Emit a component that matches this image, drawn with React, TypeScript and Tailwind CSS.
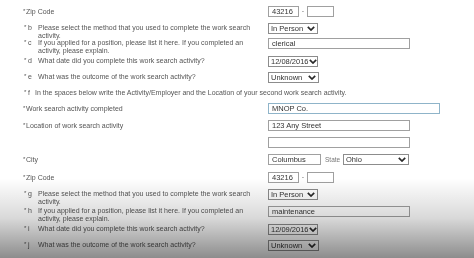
import React from "react";

const font = { fontFamily: '"Liberation Sans", Arial, sans-serif' };

const Chevron = () => (
  <svg width="8" height="5" viewBox="0 0 8 5" className="shrink-0">
    <path d="M0.8 0.8 L4 4 L7.2 0.8" fill="none" stroke="#2a2a2a" strokeWidth="1.7" />
  </svg>
);

const Select = ({ value, w }: { value: string; w: string }) => (
  <div
    className={`${w} h-[11px] border border-[#8c8c8c] bg-white flex items-center justify-between pl-[2px] pr-[2px] text-[7.5px] leading-none text-[#333]`}
  >
    <span>{value}</span>
    <Chevron />
  </div>
);

const Input = ({ value = "", w, focus }: { value?: string; w: string; focus?: boolean }) => (
  <div
    className={`${w} h-[11px] border ${
      focus ? "border-[#8fb4c9]" : "border-[#a0a0a0]"
    } bg-white flex items-center pl-[3px] text-[7.5px] leading-none text-[#333]`}
  >
    {value}
  </div>
);

const Zip = ({ value }: { value: string }) => (
  <div className="flex items-center">
    <Input value={value} w="w-[31px]" />
    <span className="w-[8px] text-center text-[7px] text-[#666]">-</span>
    <Input w="w-[27px]" />
  </div>
);

const Star = ({ w }: { w: string }) => (
  <span className={`${w} text-[#555] text-[length:6px] leading-[6px]`}>*</span>
);

const Plain = ({ text }: { text: string }) => (
  <div className="flex pt-[2px] pl-[23px] leading-[8px]">
    <Star w="w-[3px]" />
    <span>{text}</span>
  </div>
);

const Lettered = ({ letter, lines, textLeft = "w-[10px]" }: { letter: string; lines: string[]; textLeft?: string }) => (
  <div className="flex pt-[1px] pl-[24px] leading-[8px]">
    <Star w="w-[4px]" />
    <span className={textLeft}>{letter}</span>
    <span>
      {lines.map((l, i) => (
        <div key={i}>{l}</div>
      ))}
    </span>
  </div>
);

const Row = ({ h, label, field }: { h: string; label: React.ReactNode; field?: React.ReactNode }) => (
  <div className={`flex ${h}`}>
    <div className="w-[268px] shrink-0">{label}</div>
    <div>{field}</div>
  </div>
);

const methodLines = ["Please select the method that you used to complete the work search", "activity."];
const positionLines = [
  "If you applied for a position, please list it here. If you completed an",
  "activity, please explain.",
];

export default function App() {
  return (
    <div className="relative w-[474px] h-[258px] overflow-hidden bg-white text-[7px] text-[#555]" style={font}>
      <div className="pt-[6px] blur-[0.3px]">
        <Row h="h-[17px]" label={<Plain text="Zip Code" />} field={<Zip value="43216" />} />
        <Row h="h-[15px]" label={<Lettered letter="b" lines={methodLines} />} field={<Select value="In Person" w="w-[50px]" />} />
        <Row h="h-[18px]" label={<Lettered letter="c" lines={positionLines} />} field={<Input value="clerical" w="w-[142px]" />} />
        <Row
          h="h-[16px]"
          label={<Lettered letter="d" lines={["What date did you complete this work search activity?"]} />}
          field={<Select value="12/08/2016" w="w-[50px]" />}
        />
        <Row
          h="h-[16px]"
          label={<Lettered letter="e" lines={["What was the outcome of the work search activity?"]} />}
          field={<Select value="Unknown" w="w-[51px]" />}
        />
        <div className="h-[15px]">
          <Lettered
            letter="f"
            textLeft="w-[7px]"
            lines={[
              "In the spaces below write the Activity/Employer and the Location of your second work search activity.",
            ]}
          />
        </div>
        <Row h="h-[17px]" label={<Plain text="Work search activity completed" />} field={<Input value="MNOP Co." w="w-[172px]" focus />} />
        <Row h="h-[17px]" label={<Plain text="Location of work search activity" />} field={<Input value="123 Any Street" w="w-[142px]" />} />
        <Row h="h-[17px]" label={null} field={<Input w="w-[142px]" />} />
        <Row
          h="h-[18px]"
          label={<Plain text="City" />}
          field={
            <div className="flex items-center">
              <Input value="Columbus" w="w-[53px]" />
              <span className="w-[22px] pl-[4px] text-[6.5px] text-[#777]">State</span>
              <Select value="Ohio" w="w-[66px]" />
            </div>
          }
        />
        <Row h="h-[17px]" label={<Plain text="Zip Code" />} field={<Zip value="43216" />} />
        <Row h="h-[17px]" label={<Lettered letter="g" lines={methodLines} />} field={<Select value="In Person" w="w-[50px]" />} />
        <Row h="h-[18px]" label={<Lettered letter="h" lines={positionLines} />} field={<Input value="maintenance" w="w-[142px]" />} />
        <Row
          h="h-[16px]"
          label={<Lettered letter="i" lines={["What date did you complete this work search activity?"]} />}
          field={<Select value="12/09/2016" w="w-[50px]" />}
        />
        <Row
          h="h-[18px]"
          label={<Lettered letter="j" lines={["What was the outcome of the work search activity?"]} />}
          field={<Select value="Unknown" w="w-[51px]" />}
        />
      </div>
      <div className="pointer-events-none absolute inset-x-0 bottom-0 h-[80px] bg-linear-to-b from-transparent via-black/15 to-black/45" />
    </div>
  );
}
